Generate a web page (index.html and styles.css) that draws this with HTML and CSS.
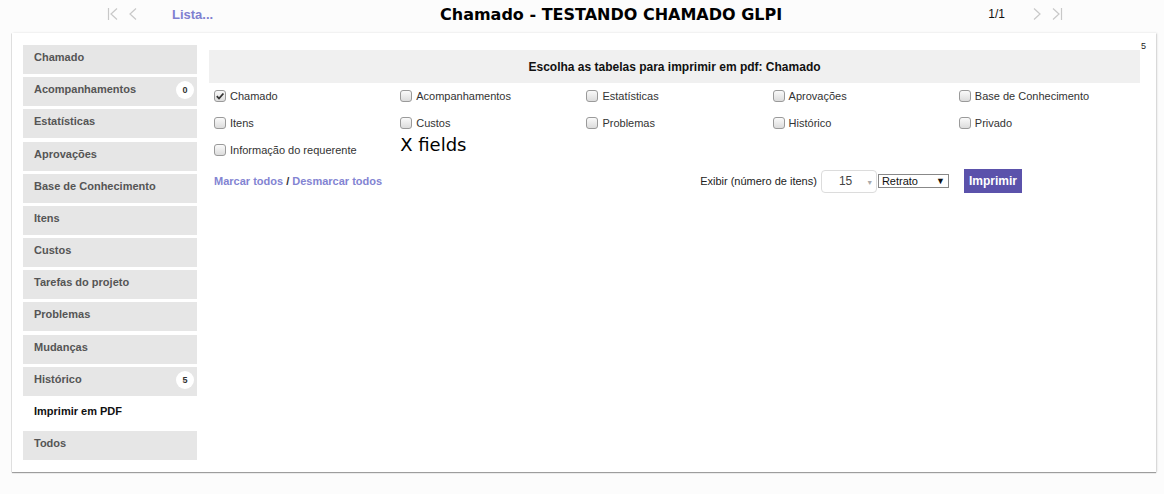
FILE: index.html
```html
<!DOCTYPE html>
<html lang="pt-BR">
<head>
  <meta charset="UTF-8" />
  <title>Chamado - TESTANDO CHAMADO GLPI</title>
  <link rel="stylesheet" href="styles.css">
</head>
<body>
  <header class="topbar">
    <div class="nav-left">
      <svg class="nav-icon" width="12" height="16" viewBox="0 0 12 16"><path d="M1.5 2v12M10 2.5L4 8l6 5.5" fill="none" stroke="#c8c8c8" stroke-width="1.2"/></svg>
      <svg class="nav-icon" width="12" height="16" viewBox="0 0 12 16"><path d="M9 2.5L3 8l6 5.5" fill="none" stroke="#c8c8c8" stroke-width="1.2"/></svg>
      <a class="list-link" href="#">Lista...</a>
    </div>
    <h1 class="title">Chamado - TESTANDO CHAMADO GLPI</h1>
    <div class="nav-right">
      <span class="counter">1/1</span>
      <svg class="nav-icon" width="12" height="16" viewBox="0 0 12 16"><path d="M3 2.5L9 8l-6 5.5" fill="none" stroke="#c8c8c8" stroke-width="1.2"/></svg>
      <svg class="nav-icon" width="12" height="16" viewBox="0 0 12 16"><path d="M10.5 2v12M2 2.5L8 8l-6 5.5" fill="none" stroke="#c8c8c8" stroke-width="1.2"/></svg>
    </div>
  </header>

  <div class="card">
    <span class="corner-count">5</span>
    <nav class="tabs">
      <div class="tab">Chamado</div>
      <div class="tab">Acompanhamentos <span class="badge">0</span></div>
      <div class="tab">Estatísticas</div>
      <div class="tab">Aprovações</div>
      <div class="tab">Base de Conhecimento</div>
      <div class="tab">Itens</div>
      <div class="tab">Custos</div>
      <div class="tab">Tarefas do projeto</div>
      <div class="tab">Problemas</div>
      <div class="tab">Mudanças</div>
      <div class="tab">Histórico <span class="badge">5</span></div>
      <div class="tab active">Imprimir em PDF</div>
      <div class="tab">Todos</div>
    </nav>

    <section class="main">
      <div class="table-head">Escolha as tabelas para imprimir em pdf: Chamado</div>
      <div class="options">
        <label class="opt"><span class="box checked"><svg width="10" height="10" viewBox="0 0 10 10"><path d="M1.8 5.2l2.2 2.3 4.4-5" fill="none" stroke="#333" stroke-width="1.8"/></svg></span>Chamado</label>
        <label class="opt"><span class="box"></span>Acompanhamentos</label>
        <label class="opt"><span class="box"></span>Estatísticas</label>
        <label class="opt"><span class="box"></span>Aprovações</label>
        <label class="opt"><span class="box"></span>Base de Conhecimento</label>

        <label class="opt"><span class="box"></span>Itens</label>
        <label class="opt"><span class="box"></span>Custos</label>
        <label class="opt"><span class="box"></span>Problemas</label>
        <label class="opt"><span class="box"></span>Histórico</label>
        <label class="opt"><span class="box"></span>Privado</label>

        <label class="opt"><span class="box"></span>Informação do requerente</label>
        <div class="opt xfields">X fields</div>
      </div>

      <div class="actions">
        <div class="select-links">
          <a href="#">Marcar todos</a> / <a href="#">Desmarcar todos</a>
        </div>
        <div class="print-opts">
          <span>Exibir (número de itens)</span>
          <div class="num-select">15 <span class="caret">▼</span></div>
          <div class="orient-select">Retrato <span class="caret-dark">▼</span></div>
          <button class="print-btn">Imprimir</button>
        </div>
      </div>
    </section>
  </div>
</body>
</html>
```

FILE: styles.css
```css
* {
  margin: 0;
  padding: 0;
  box-sizing: border-box;
}

body {
  background: #fcfcfc;
  font-family: 'Liberation Sans', Arial, sans-serif;
  color: #333;
  width: 1164px;
  height: 494px;
}

a {
  text-decoration: none;
}

.topbar {
  height: 28px;
  display: flex;
  align-items: center;
}

.nav-left {
  width: 440px;
  display: flex;
  align-items: center;
  padding-left: 107px;
}

.nav-icon {
  display: block;
  margin-right: 8px;
}

.list-link {
  margin-left: 25px;
  font-weight: bold;
  font-size: 13px;
  color: #7f80d0;
}

.title {
  font-family: 'DejaVu Sans', sans-serif;
  font-size: 16px;
  font-weight: bold;
  color: #000;
  white-space: nowrap;
}

.nav-right {
  margin-left: auto;
  margin-right: 101px;
  display: flex;
  align-items: center;
}

.nav-right .nav-icon {
  margin-right: 0;
  margin-left: 8px;
}

.counter {
  font-size: 12px;
  color: #111;
  margin-right: 18px;
}

.card {
  position: relative;
  margin: 5px 8px 0 12px;
  height: 439px;
  background: #fff;
  box-shadow: 0 1px 1px rgba(0, 0, 0, 0.35), 1px 0 2px rgba(0, 0, 0, 0.12), -1px 0 0 #efefef;
  display: flex;
  padding: 12px 16px 12px 11px;
}

.corner-count {
  position: absolute;
  top: 8px;
  right: 10px;
  font-size: 9px;
  color: #222;
}

.tabs {
  width: 174px;
  display: flex;
  flex-direction: column;
  gap: 3.2px;
}

.tab {
  height: 29px;
  background: #e6e6e6;
  color: #555;
  font-weight: bold;
  font-size: 11px;
  padding: 6px 11px 0;
  position: relative;
}

.tab.active {
  background: transparent;
  color: #111;
}

.badge {
  position: absolute;
  right: 3px;
  top: 4px;
  width: 18px;
  height: 18px;
  border-radius: 50%;
  background: #fff;
  color: #333;
  font-size: 9px;
  display: flex;
  align-items: center;
  justify-content: center;
}

.main {
  flex: 1;
  margin-left: 12px;
  padding-top: 5px;
}

.table-head {
  height: 33px;
  background: #f0f0f0;
  display: flex;
  align-items: center;
  justify-content: center;
  font-weight: bold;
  font-size: 12px;
  color: #111;
}

.options {
  display: grid;
  grid-template-columns: repeat(5, 1fr);
  grid-auto-rows: 27px;
  margin-top: -1px;
}

.opt {
  display: flex;
  align-items: center;
  padding-left: 5px;
  font-size: 11px;
  color: #333;
}

.box {
  width: 12px;
  height: 12px;
  border: 1px solid #9a9a9a;
  border-radius: 3px;
  background: linear-gradient(#fafafa, #dcdcdc);
  margin-right: 4px;
  display: flex;
  align-items: center;
  justify-content: center;
}

.xfields {
  font-family: 'DejaVu Sans', sans-serif;
  font-size: 18px;
  color: #000;
  align-items: flex-start;
  padding-top: 0;
  margin-top: -2px;
}

.actions {
  display: flex;
  align-items: center;
  margin-top: 6px;
  height: 24px;
}

.select-links {
  padding-left: 5px;
  font-size: 11px;
  font-weight: bold;
  color: #333;
}

.select-links a {
  color: #8384d2;
}

.print-opts {
  margin-left: 318px;
  display: flex;
  align-items: center;
  font-size: 11px;
  color: #222;
}

.num-select {
  margin-left: 4px;
  width: 56px;
  height: 23px;
  border: 1px solid #dcdcdc;
  border-radius: 4px;
  font-size: 12px;
  color: #444;
  display: flex;
  align-items: center;
  padding-left: 17px;
}

.caret {
  font-size: 7px;
  color: #aaa;
  margin-left: 14px;
  margin-top: 2px;
}

.orient-select {
  margin-left: 1px;
  width: 71px;
  height: 14px;
  border: 1px solid #888;
  font-size: 11px;
  color: #111;
  display: flex;
  align-items: center;
  padding-left: 3px;
}

.caret-dark {
  font-size: 9px;
  margin-left: auto;
  margin-right: 3px;
}

.print-btn {
  margin-left: 15px;
  width: 58px;
  height: 24px;
  border: none;
  background: #5b52ab;
  color: #fff;
  font-family: 'Liberation Sans', Arial, sans-serif;
  font-weight: bold;
  font-size: 12px;
}
```
